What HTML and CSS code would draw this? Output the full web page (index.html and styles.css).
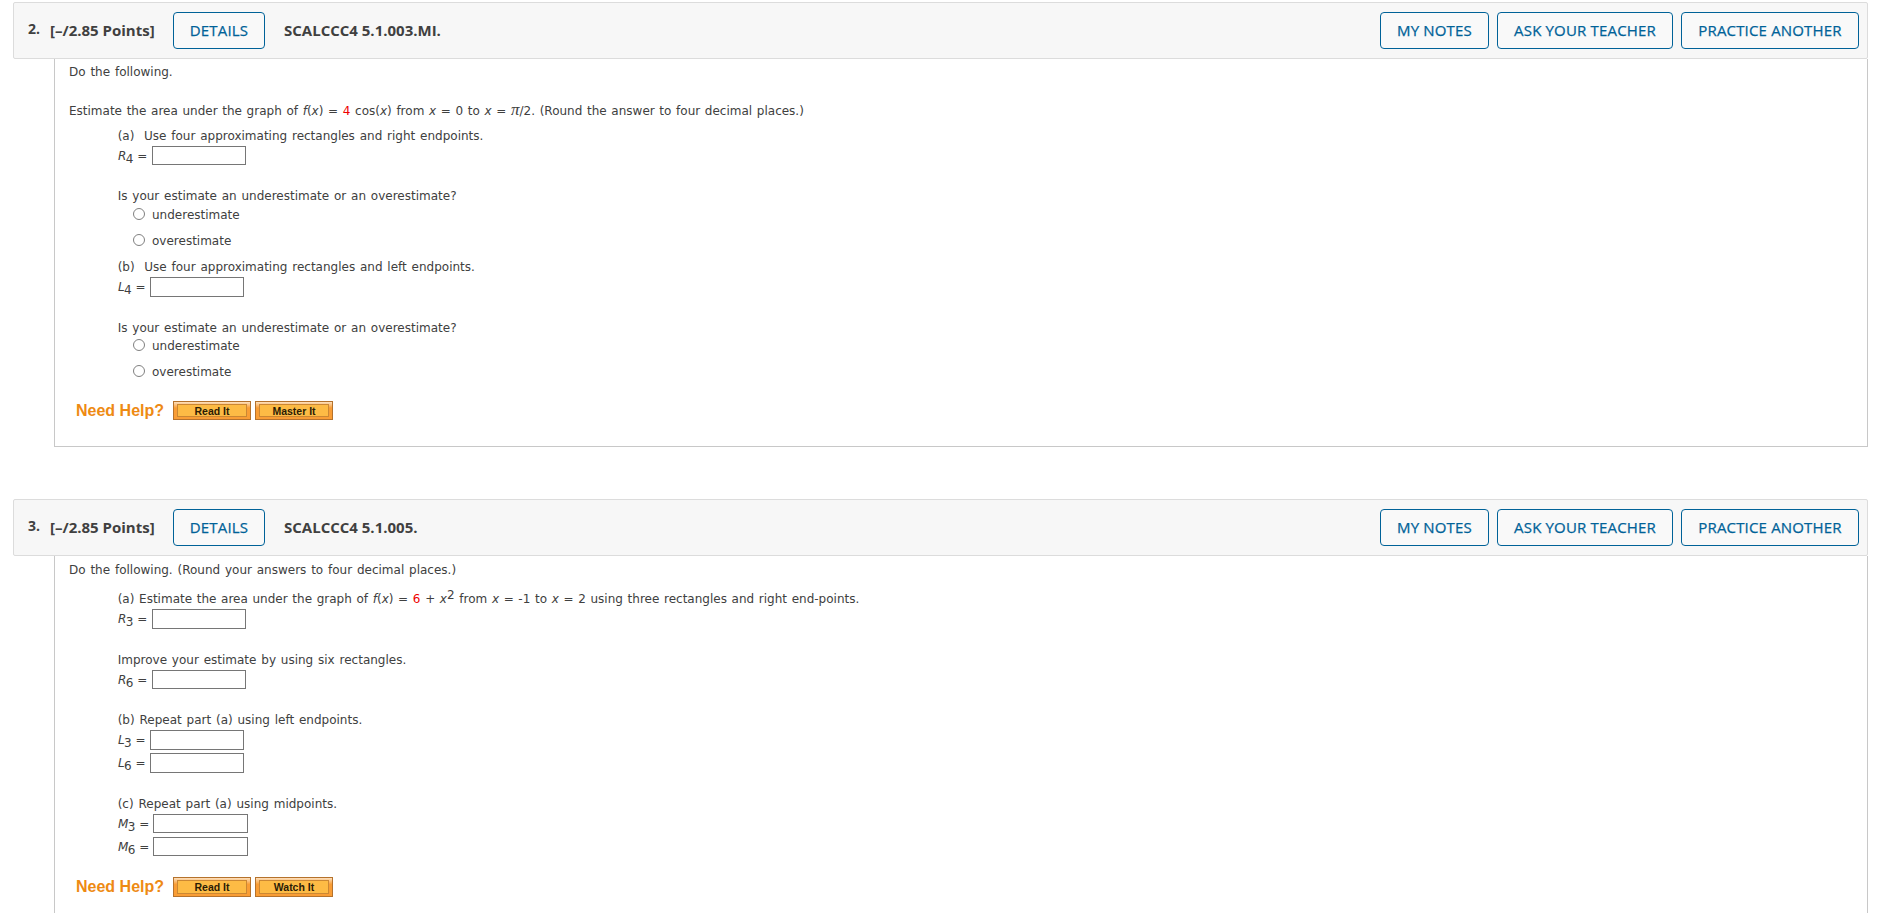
FILE: index.html
```
<!DOCTYPE html>
<html lang="en">
<head>
<meta charset="utf-8">
<title>Homework</title>
<link rel="stylesheet" href="styles.css">
</head>
<body>
<section class="question">
  <header class="bar">
    <span class="num">2.</span><span class="points">[–/2.85 Points]</span>
    <button class="btn details">DETAILS</button><span class="code">SCALCCC4 5.1.003.MI.</span>
    <div class="actions"><button class="btn notes">MY NOTES</button><button class="btn ask">ASK YOUR TEACHER</button><button class="btn practice">PRACTICE ANOTHER</button></div>
  </header>
  <div class="body rows-two">
    <p><span>Do the following.</span></p>
    <p class="snug"><span>Estimate the area under the graph of <i>f</i>(<i>x</i>) = <b class="red">4</b> cos(<i>x</i>) from <i>x</i> = 0 to <i>x</i> = <span class="pi">π</span>/2. (Round the answer to four decimal places.)</span></p>
    <p class="in"><span>(a)&nbsp; Use four approximating rectangles and right endpoints.</span></p>
    <div class="in answer"><label class="r"><i>R</i><sub>4</sub> =</label><input class="short"></div>
    <p class="in"><span>Is your estimate an underestimate or an overestimate?</span></p>
    <label class="choice"><input type="radio" name="a"><span>underestimate</span></label>
    <label class="choice"><input type="radio" name="a"><span>overestimate</span></label>
    <p class="in"><span>(b)&nbsp; Use four approximating rectangles and left endpoints.</span></p>
    <div class="in answer"><label class="l"><i>L</i><sub>4</sub> =</label><input></div>
    <p class="in"><span>Is your estimate an underestimate or an overestimate?</span></p>
    <label class="choice"><input type="radio" name="b"><span>underestimate</span></label>
    <label class="choice"><input type="radio" name="b"><span>overestimate</span></label>
    <div class="help"><strong>Need Help?</strong><button class="gold short">Read It</button><button class="gold short">Master It</button></div>
  </div>
</section>
<section class="question">
  <header class="bar">
    <span class="num">3.</span><span class="points">[–/2.85 Points]</span>
    <button class="btn details">DETAILS</button><span class="code">SCALCCC4 5.1.005.</span>
    <div class="actions"><button class="btn notes">MY NOTES</button><button class="btn ask">ASK YOUR TEACHER</button><button class="btn practice">PRACTICE ANOTHER</button></div>
  </header>
  <div class="body rows-three">
    <p><span>Do the following. (Round your answers to four decimal places.)</span></p>
    <p class="in snug"><span>(a) Estimate the area under the graph of <i>f</i>(<i>x</i>) = <b class="red">6</b> + <i>x</i><sup>2</sup> from <i>x</i> = -1 to <i>x</i> = 2 using three rectangles and right end-points.</span></p>
    <div class="in answer"><label class="r"><i>R</i><sub>3</sub> =</label><input></div>
    <p class="in"><span>Improve your estimate by using six rectangles.</span></p>
    <div class="in answer"><label class="r"><i>R</i><sub>6</sub> =</label><input class="short"></div>
    <p class="in"><span>(b) Repeat part (a) using left endpoints.</span></p>
    <div class="in answer"><label class="l"><i>L</i><sub>3</sub> =</label><input></div>
    <div class="in answer"><label class="l"><i>L</i><sub>6</sub> =</label><input></div>
    <p class="in"><span>(c) Repeat part (a) using midpoints.</span></p>
    <div class="in answer"><label class="m"><i>M</i><sub>3</sub> =</label><input class="short wide"></div>
    <div class="in answer"><label class="m"><i>M</i><sub>6</sub> =</label><input class="short wide"></div>
    <div class="help"><strong>Need Help?</strong><button class="gold">Read It</button><button class="gold">Watch It</button></div>
  </div>
</section>
</body>
</html>
```
FILE: styles.css
```
* { box-sizing: border-box; }
body {
  margin: 0;
  padding: 2px 13px 0;
  background: #fff;
  color: #404040;
  font: 12px/16px "DejaVu Sans", Verdana, sans-serif;
}
.question + .question { margin-top: 52px; }
.bar {
  display: flex;
  align-items: center;
  height: 57px;
  padding: 0 8px 0 14px;
  border: 1px solid #dcdcdc;
  border-radius: 2px;
  background: #f7f7f7;
  font: 700 15px/20px "Open Sans", sans-serif;
  white-space: nowrap;
}
.num, .points, .code { padding-bottom: 2px; }
.num { width: 22px; padding-bottom: 3px; font-size: 14px; }
.points { width: 123px; }
.code { margin-left: 19px; }
.btn {
  height: 37px;
  padding: 0 0 2px;
  border: 1px solid #006298;
  border-radius: 4px;
  background: #f9f9f9;
  color: #006298;
  font: 500 15px/20px "Open Sans", sans-serif;
  letter-spacing: 0.17px;
  -webkit-text-stroke: 0.25px #006298;
  white-space: nowrap;
}
.details { width: 92px; }
.actions { display: flex; gap: 8px; margin-left: auto; }
.notes { width: 109px; }
.ask { width: 176px; }
.practice { width: 178px; }
.body {
  display: grid;
  align-items: start;
  margin-left: 41px;
  padding-left: 14px;
  border: solid #c8c8c8;
  border-width: 0 1px;
  white-space: nowrap;
}
.rows-two {
  height: 388px;
  padding-top: 5px;
  border-bottom-width: 1px;
  grid-template-rows: 39px 25px 20px 40px 19px 26px 26px 20px 41px 18px 26px 37px 20px;
}
.rows-three {
  height: 357px;
  padding-top: 6px;
  grid-template-rows: 29px 20px 41px 20px 40px 20px 23px 41px 20px 23px 38px 20px;
}
p { margin: 0; height: 16px; word-spacing: 1px; }
.snug { word-spacing: 0.85px; }
.in { padding-left: 48.7px; }
.red { color: #e00; font-weight: 400; }
.pi { font-family: "Liberation Serif", serif; font-size: 17px; font-style: italic; line-height: 0; }
sub, sup { font-size: 12px; line-height: 0; }
sub { vertical-align: -3px; }
sup { vertical-align: 4px; }
.answer { display: flex; height: 16px; padding-left: 49px; }
.answer label { letter-spacing: -0.6px; word-spacing: 1.2px; }
.r { width: 34px; }
.l { width: 32px; }
.m { width: 35px; }
.answer input {
  width: 94px;
  height: 20px;
  margin: -2px 0 0;
  padding: 0;
  border: 1px solid #767676;
  border-radius: 0;
  background: #fff;
}
.answer input.short { height: 19px; }
.answer input.wide { width: 95px; }
.choice { display: flex; height: 16px; padding-left: 64px; }
.choice input {
  appearance: none;
  width: 12px;
  height: 12px;
  margin: 1px 7px 0 0;
  border: 1px solid #808080;
  border-radius: 50%;
}
.help { display: flex; height: 20px; padding-left: 7px; }
.help strong {
  width: 97px;
  color: #ee8a13;
  font: 700 16px/19px "Liberation Sans", Arial, sans-serif;
}
.gold {
  position: relative;
  z-index: 0;
  width: 78px;
  height: 20px;
  margin-right: 4px;
  padding: 2px 3px;
  border: 1px solid #b5722c;
  background: linear-gradient(#fde0bd, #f99d35 35%, #f99d35);
  color: #2b1c05;
  font: 700 10.5px/12px "Liberation Sans", Arial, sans-serif;
}
.gold::before {
  content: "";
  position: absolute;
  inset: 2px 3px;
  z-index: -1;
  border: 1px solid #cb8733;
  background: #fdbb45;
}
.gold.short { height: 19px; }
```
